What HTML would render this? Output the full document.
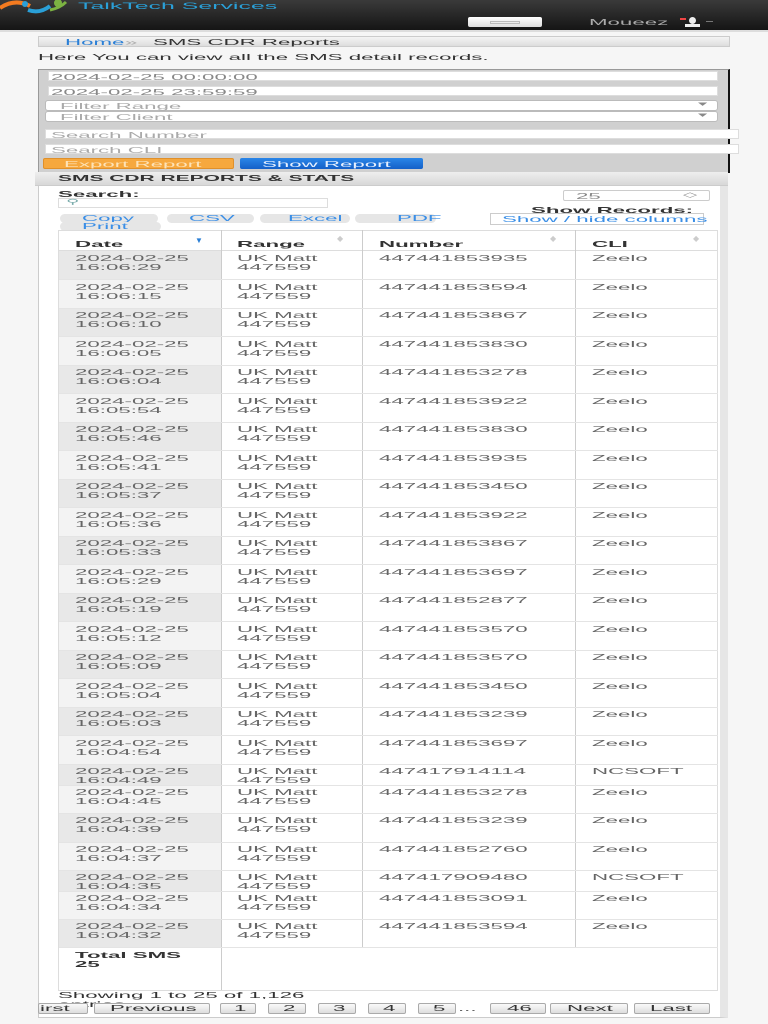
<!DOCTYPE html>
<html><head><meta charset="utf-8"><style>
*{margin:0;padding:0;box-sizing:border-box}
body{width:768px;height:1024px;overflow:hidden;background:#f6f6f6;font-family:"Liberation Sans",sans-serif;font-size:10px;color:#555;position:relative}
.a{position:absolute}
.t{position:absolute;white-space:nowrap;transform:scaleX(2.62);transform-origin:0 0;line-height:8.6px;font-size:8.5px;margin-top:1px;color:#666}
.b{font-weight:bold;color:#333}
.in{position:absolute;background:#fff;border:1px solid #ddd}
.pill{position:absolute;background:#e6e6e6;border-radius:6px;height:9px}
.pg{position:absolute;top:1003px;height:11px;border:1px solid #aaa;background:linear-gradient(#fafafa,#ddd);border-radius:2px}
</style></head><body>
<div class="a" style="left:0;top:0;width:768px;height:30px;background:linear-gradient(#3a3a3a,#151515)"></div>
<svg class="a" style="left:0;top:0" width="72" height="16" viewBox="0 0 72 16"><path d="M0 8 Q15 -2 30 6" stroke="#f47b20" stroke-width="4" fill="none"/><circle cx="25" cy="4" r="3" fill="#2aa0d8"/><path d="M28 10 Q40 14 50 6" stroke="#2aa0d8" stroke-width="4" fill="none"/><circle cx="58" cy="3" r="4" fill="#7cb342"/><path d="M50 10 Q60 8 66 2" stroke="#7cb342" stroke-width="3" fill="none"/></svg>
<span class="t" style="left:78px;top:2px;color:#2aa0d8;font-size:9.5px">TalkTech Services</span>
<div class="a" style="left:468px;top:17px;width:74px;height:10px;background:linear-gradient(#fff,#ddd);border-radius:2px"></div>
<div class="a" style="left:490px;top:21px;width:30px;height:3px;border:1px solid #bbb"></div>
<span class="t" style="left:589px;top:17px;color:#aaa">Moueez</span>
<div class="a" style="left:680px;top:18px;width:6px;height:2px;background:#e44"></div>
<div class="a" style="left:689px;top:17px;width:7px;height:7px;border-radius:50%;background:#eee"></div>
<div class="a" style="left:685px;top:24px;width:15px;height:3px;background:#eee"></div>
<div class="a" style="left:706px;top:21px;width:7px;height:1px;background:#777"></div>
<div class="a" style="left:0;top:30px;width:768px;height:2px;background:#ddd"></div>
<div class="a" style="left:38px;top:36px;width:692px;height:11px;background:linear-gradient(#f4f4f4,#ddd);border:1px solid #ccc"></div>
<span class="t" style="left:65px;top:37px;color:#2a7fd6">Home</span>
<span class="t" style="left:125px;top:37px;color:#aaa">»</span>
<span class="t" style="left:153px;top:37px;color:#333">SMS CDR Reports</span>
<span class="t" style="left:38px;top:52px;color:#333">Here You can view all the SMS detail records.</span>
<div class="a" style="left:38px;top:69px;width:692px;height:104px;background:#d0d0d0;border-right:2px solid #111;border-left:1px solid #999;border-top:1px solid #999"></div>
<div class="in" style="left:48px;top:71px;width:670px;height:10px"></div>
<span class="t" style="left:51px;top:72px;color:#888">2024-02-25 00:00:00</span>
<div class="in" style="left:48px;top:86px;width:670px;height:10px"></div>
<span class="t" style="left:51px;top:87px;color:#888">2024-02-25 23:59:59</span>
<div class="in" style="left:45px;top:100px;width:673px;height:11px;border-radius:3px;border-color:#bbb"></div>
<span class="t" style="left:60px;top:101px;color:#aaa">Filter Range</span>
<span class="t" style="left:698px;top:100px;color:#888;font-size:7px">▾</span>
<div class="in" style="left:45px;top:111px;width:673px;height:11px;border-radius:3px;border-color:#bbb"></div>
<span class="t" style="left:60px;top:112px;color:#aaa">Filter Client</span>
<span class="t" style="left:698px;top:111px;color:#888;font-size:7px">▾</span>
<div class="in" style="left:45px;top:129px;width:694px;height:10px"></div>
<span class="t" style="left:51px;top:130px;color:#aaa">Search Number</span>
<div class="in" style="left:45px;top:144px;width:694px;height:10px"></div>
<span class="t" style="left:51px;top:145px;color:#aaa">Search CLI</span>
<div class="a" style="left:43px;top:158px;width:191px;height:11px;background:#f6a83e;border:1px solid #e0902a;border-radius:2px"></div>
<span class="t" style="left:64px;top:159px;color:#fde3b8">Export Report</span>
<div class="a" style="left:240px;top:158px;width:183px;height:11px;background:linear-gradient(#2a86e8,#1460c8);border-radius:2px"></div>
<span class="t" style="left:262px;top:159px;color:#e6f0ff">Show Report</span>
<div class="a" style="left:38px;top:172px;width:690px;height:846px;background:#fff;border:1px solid #ccc;border-right:8px solid #e6e6e6"></div>
<div class="a" style="left:35px;top:172px;width:693px;height:14px;background:linear-gradient(#eee,#d8d8d8);border-bottom:1px solid #ccc"></div>
<span class="t b" style="left:58px;top:174px;font-size:8px">SMS CDR REPORTS &amp; STATS</span>
<span class="t b" style="left:58px;top:189px">Search:</span>
<div class="in" style="left:58px;top:198px;width:270px;height:10px"></div>
<span class="t" style="left:66px;top:198px;color:#7aa;font-size:7px">⚲</span>
<div class="in" style="left:563px;top:190px;width:147px;height:11px;border-color:#ccc;border-radius:2px"></div>
<span class="t" style="left:576px;top:191px;color:#888">25</span>
<span class="t" style="left:683px;top:191px;color:#888;font-size:7px">◇</span>
<span class="t b" style="left:531px;top:205px">Show Records:</span>
<div class="pill" style="left:60px;top:214px;width:98px"></div><span class="t" style="left:82px;top:213px;color:#3a8ee6">Copy</span>
<div class="pill" style="left:167px;top:214px;width:87px"></div><span class="t" style="left:189px;top:213px;color:#3a8ee6">CSV</span>
<div class="pill" style="left:260px;top:214px;width:90px"></div><span class="t" style="left:288px;top:213px;color:#3a8ee6">Excel</span>
<div class="pill" style="left:355px;top:214px;width:81px"></div><span class="t" style="left:397px;top:213px;color:#3a8ee6">PDF</span>
<div class="pill" style="left:60px;top:222px;width:101px"></div><span class="t" style="left:82px;top:221px;color:#3a8ee6">Print</span>
<div class="in" style="left:490px;top:213px;width:214px;height:12px;border-color:#ccc"></div>
<span class="t" style="left:502px;top:214px;color:#3a8ee6">Show / hide columns</span>
<div class="a" style="left:58px;top:230px;width:660px;height:760px;border:1px solid #ddd;border-bottom:none"></div>
<div class="a" style="left:58px;top:250px;width:660px;height:1px;background:#ddd"></div>
<div class="a" style="left:221px;top:230px;width:1px;height:760px;background:#ccc"></div>
<div class="a" style="left:362px;top:230px;width:1px;height:718px;background:#ccc"></div>
<div class="a" style="left:575px;top:230px;width:1px;height:718px;background:#ccc"></div>
<span class="t b" style="left:75px;top:239px">Date</span><span class="a" style="left:195px;top:236px;color:#2a7fd6;font-size:8px">▼</span>
<span class="t b" style="left:237px;top:239px">Range</span><span class="a" style="left:337px;top:234px;color:#ccc;font-size:8px">◆</span>
<span class="t b" style="left:379px;top:239px">Number</span><span class="a" style="left:550px;top:234px;color:#ccc;font-size:8px">◆</span>
<span class="t b" style="left:592px;top:239px">CLI</span><span class="a" style="left:693px;top:234px;color:#ccc;font-size:8px">◆</span>
<div class="a" style="left:59px;top:251px;width:162px;height:28px;background:#e8e8e8"></div><div class="a" style="left:59px;top:279px;width:659px;height:1px;background:#e4e4e4"></div><span class="t" style="left:75px;top:253px">2024-02-25<br>16:06:29</span><span class="t" style="left:237px;top:253px">UK Matt<br>447559</span><span class="t" style="left:379px;top:253px">447441853935</span><span class="t" style="left:592px;top:253px">Zeelo</span>
<div class="a" style="left:59px;top:280px;width:162px;height:28px;background:#f3f3f3"></div><div class="a" style="left:59px;top:308px;width:659px;height:1px;background:#e4e4e4"></div><span class="t" style="left:75px;top:282px">2024-02-25<br>16:06:15</span><span class="t" style="left:237px;top:282px">UK Matt<br>447559</span><span class="t" style="left:379px;top:282px">447441853594</span><span class="t" style="left:592px;top:282px">Zeelo</span>
<div class="a" style="left:59px;top:309px;width:162px;height:27px;background:#e8e8e8"></div><div class="a" style="left:59px;top:336px;width:659px;height:1px;background:#e4e4e4"></div><span class="t" style="left:75px;top:310px">2024-02-25<br>16:06:10</span><span class="t" style="left:237px;top:310px">UK Matt<br>447559</span><span class="t" style="left:379px;top:310px">447441853867</span><span class="t" style="left:592px;top:310px">Zeelo</span>
<div class="a" style="left:59px;top:337px;width:162px;height:28px;background:#f3f3f3"></div><div class="a" style="left:59px;top:365px;width:659px;height:1px;background:#e4e4e4"></div><span class="t" style="left:75px;top:339px">2024-02-25<br>16:06:05</span><span class="t" style="left:237px;top:339px">UK Matt<br>447559</span><span class="t" style="left:379px;top:339px">447441853830</span><span class="t" style="left:592px;top:339px">Zeelo</span>
<div class="a" style="left:59px;top:366px;width:162px;height:27px;background:#e8e8e8"></div><div class="a" style="left:59px;top:393px;width:659px;height:1px;background:#e4e4e4"></div><span class="t" style="left:75px;top:367px">2024-02-25<br>16:06:04</span><span class="t" style="left:237px;top:367px">UK Matt<br>447559</span><span class="t" style="left:379px;top:367px">447441853278</span><span class="t" style="left:592px;top:367px">Zeelo</span>
<div class="a" style="left:59px;top:394px;width:162px;height:28px;background:#f3f3f3"></div><div class="a" style="left:59px;top:422px;width:659px;height:1px;background:#e4e4e4"></div><span class="t" style="left:75px;top:396px">2024-02-25<br>16:05:54</span><span class="t" style="left:237px;top:396px">UK Matt<br>447559</span><span class="t" style="left:379px;top:396px">447441853922</span><span class="t" style="left:592px;top:396px">Zeelo</span>
<div class="a" style="left:59px;top:423px;width:162px;height:27px;background:#e8e8e8"></div><div class="a" style="left:59px;top:450px;width:659px;height:1px;background:#e4e4e4"></div><span class="t" style="left:75px;top:424px">2024-02-25<br>16:05:46</span><span class="t" style="left:237px;top:424px">UK Matt<br>447559</span><span class="t" style="left:379px;top:424px">447441853830</span><span class="t" style="left:592px;top:424px">Zeelo</span>
<div class="a" style="left:59px;top:451px;width:162px;height:28px;background:#f3f3f3"></div><div class="a" style="left:59px;top:479px;width:659px;height:1px;background:#e4e4e4"></div><span class="t" style="left:75px;top:453px">2024-02-25<br>16:05:41</span><span class="t" style="left:237px;top:453px">UK Matt<br>447559</span><span class="t" style="left:379px;top:453px">447441853935</span><span class="t" style="left:592px;top:453px">Zeelo</span>
<div class="a" style="left:59px;top:480px;width:162px;height:27px;background:#e8e8e8"></div><div class="a" style="left:59px;top:507px;width:659px;height:1px;background:#e4e4e4"></div><span class="t" style="left:75px;top:481px">2024-02-25<br>16:05:37</span><span class="t" style="left:237px;top:481px">UK Matt<br>447559</span><span class="t" style="left:379px;top:481px">447441853450</span><span class="t" style="left:592px;top:481px">Zeelo</span>
<div class="a" style="left:59px;top:508px;width:162px;height:28px;background:#f3f3f3"></div><div class="a" style="left:59px;top:536px;width:659px;height:1px;background:#e4e4e4"></div><span class="t" style="left:75px;top:510px">2024-02-25<br>16:05:36</span><span class="t" style="left:237px;top:510px">UK Matt<br>447559</span><span class="t" style="left:379px;top:510px">447441853922</span><span class="t" style="left:592px;top:510px">Zeelo</span>
<div class="a" style="left:59px;top:537px;width:162px;height:27px;background:#e8e8e8"></div><div class="a" style="left:59px;top:564px;width:659px;height:1px;background:#e4e4e4"></div><span class="t" style="left:75px;top:538px">2024-02-25<br>16:05:33</span><span class="t" style="left:237px;top:538px">UK Matt<br>447559</span><span class="t" style="left:379px;top:538px">447441853867</span><span class="t" style="left:592px;top:538px">Zeelo</span>
<div class="a" style="left:59px;top:565px;width:162px;height:28px;background:#f3f3f3"></div><div class="a" style="left:59px;top:593px;width:659px;height:1px;background:#e4e4e4"></div><span class="t" style="left:75px;top:567px">2024-02-25<br>16:05:29</span><span class="t" style="left:237px;top:567px">UK Matt<br>447559</span><span class="t" style="left:379px;top:567px">447441853697</span><span class="t" style="left:592px;top:567px">Zeelo</span>
<div class="a" style="left:59px;top:594px;width:162px;height:27px;background:#e8e8e8"></div><div class="a" style="left:59px;top:621px;width:659px;height:1px;background:#e4e4e4"></div><span class="t" style="left:75px;top:595px">2024-02-25<br>16:05:19</span><span class="t" style="left:237px;top:595px">UK Matt<br>447559</span><span class="t" style="left:379px;top:595px">447441852877</span><span class="t" style="left:592px;top:595px">Zeelo</span>
<div class="a" style="left:59px;top:622px;width:162px;height:28px;background:#f3f3f3"></div><div class="a" style="left:59px;top:650px;width:659px;height:1px;background:#e4e4e4"></div><span class="t" style="left:75px;top:624px">2024-02-25<br>16:05:12</span><span class="t" style="left:237px;top:624px">UK Matt<br>447559</span><span class="t" style="left:379px;top:624px">447441853570</span><span class="t" style="left:592px;top:624px">Zeelo</span>
<div class="a" style="left:59px;top:651px;width:162px;height:27px;background:#e8e8e8"></div><div class="a" style="left:59px;top:678px;width:659px;height:1px;background:#e4e4e4"></div><span class="t" style="left:75px;top:652px">2024-02-25<br>16:05:09</span><span class="t" style="left:237px;top:652px">UK Matt<br>447559</span><span class="t" style="left:379px;top:652px">447441853570</span><span class="t" style="left:592px;top:652px">Zeelo</span>
<div class="a" style="left:59px;top:679px;width:162px;height:28px;background:#f3f3f3"></div><div class="a" style="left:59px;top:707px;width:659px;height:1px;background:#e4e4e4"></div><span class="t" style="left:75px;top:681px">2024-02-25<br>16:05:04</span><span class="t" style="left:237px;top:681px">UK Matt<br>447559</span><span class="t" style="left:379px;top:681px">447441853450</span><span class="t" style="left:592px;top:681px">Zeelo</span>
<div class="a" style="left:59px;top:708px;width:162px;height:27px;background:#e8e8e8"></div><div class="a" style="left:59px;top:735px;width:659px;height:1px;background:#e4e4e4"></div><span class="t" style="left:75px;top:709px">2024-02-25<br>16:05:03</span><span class="t" style="left:237px;top:709px">UK Matt<br>447559</span><span class="t" style="left:379px;top:709px">447441853239</span><span class="t" style="left:592px;top:709px">Zeelo</span>
<div class="a" style="left:59px;top:736px;width:162px;height:28px;background:#f3f3f3"></div><div class="a" style="left:59px;top:764px;width:659px;height:1px;background:#e4e4e4"></div><span class="t" style="left:75px;top:738px">2024-02-25<br>16:04:54</span><span class="t" style="left:237px;top:738px">UK Matt<br>447559</span><span class="t" style="left:379px;top:738px">447441853697</span><span class="t" style="left:592px;top:738px">Zeelo</span>
<div class="a" style="left:59px;top:765px;width:162px;height:20px;background:#e8e8e8"></div><div class="a" style="left:59px;top:785px;width:659px;height:1px;background:#e4e4e4"></div><span class="t" style="left:75px;top:766px">2024-02-25<br>16:04:49</span><span class="t" style="left:237px;top:766px">UK Matt<br>447559</span><span class="t" style="left:379px;top:766px">447417914114</span><span class="t" style="left:592px;top:766px">NCSOFT</span>
<div class="a" style="left:59px;top:786px;width:162px;height:27px;background:#f3f3f3"></div><div class="a" style="left:59px;top:813px;width:659px;height:1px;background:#e4e4e4"></div><span class="t" style="left:75px;top:787px">2024-02-25<br>16:04:45</span><span class="t" style="left:237px;top:787px">UK Matt<br>447559</span><span class="t" style="left:379px;top:787px">447441853278</span><span class="t" style="left:592px;top:787px">Zeelo</span>
<div class="a" style="left:59px;top:814px;width:162px;height:28px;background:#e8e8e8"></div><div class="a" style="left:59px;top:842px;width:659px;height:1px;background:#e4e4e4"></div><span class="t" style="left:75px;top:815px">2024-02-25<br>16:04:39</span><span class="t" style="left:237px;top:815px">UK Matt<br>447559</span><span class="t" style="left:379px;top:815px">447441853239</span><span class="t" style="left:592px;top:815px">Zeelo</span>
<div class="a" style="left:59px;top:843px;width:162px;height:27px;background:#f3f3f3"></div><div class="a" style="left:59px;top:870px;width:659px;height:1px;background:#e4e4e4"></div><span class="t" style="left:75px;top:844px">2024-02-25<br>16:04:37</span><span class="t" style="left:237px;top:844px">UK Matt<br>447559</span><span class="t" style="left:379px;top:844px">447441852760</span><span class="t" style="left:592px;top:844px">Zeelo</span>
<div class="a" style="left:59px;top:871px;width:162px;height:20px;background:#e8e8e8"></div><div class="a" style="left:59px;top:891px;width:659px;height:1px;background:#e4e4e4"></div><span class="t" style="left:75px;top:872px">2024-02-25<br>16:04:35</span><span class="t" style="left:237px;top:872px">UK Matt<br>447559</span><span class="t" style="left:379px;top:872px">447417909480</span><span class="t" style="left:592px;top:872px">NCSOFT</span>
<div class="a" style="left:59px;top:892px;width:162px;height:27px;background:#f3f3f3"></div><div class="a" style="left:59px;top:919px;width:659px;height:1px;background:#e4e4e4"></div><span class="t" style="left:75px;top:893px">2024-02-25<br>16:04:34</span><span class="t" style="left:237px;top:893px">UK Matt<br>447559</span><span class="t" style="left:379px;top:893px">447441853091</span><span class="t" style="left:592px;top:893px">Zeelo</span>
<div class="a" style="left:59px;top:920px;width:162px;height:27px;background:#e8e8e8"></div><div class="a" style="left:59px;top:947px;width:659px;height:1px;background:#e4e4e4"></div><span class="t" style="left:75px;top:921px">2024-02-25<br>16:04:32</span><span class="t" style="left:237px;top:921px">UK Matt<br>447559</span><span class="t" style="left:379px;top:921px">447441853594</span><span class="t" style="left:592px;top:921px">Zeelo</span>
<span class="t b" style="left:75px;top:950px">Total SMS<br>25</span>
<div class="a" style="left:58px;top:990px;width:660px;height:1px;background:#ddd"></div>
<span class="t" style="left:58px;top:990px;color:#333">Showing 1 to 25 of 1,126<br>entries</span>
<div class="pg" style="left:38px;width:50px"></div><span class="t" style="left:40px;top:1003px;color:#333">irst</span>
<div class="pg" style="left:94px;width:116px"></div><span class="t" style="left:110px;top:1003px;color:#333">Previous</span>
<div class="pg" style="left:220px;width:36px"></div><span class="t" style="left:234px;top:1003px;color:#333">1</span>
<div class="pg" style="left:268px;width:38px"></div><span class="t" style="left:283px;top:1003px;color:#333">2</span>
<div class="pg" style="left:318px;width:38px"></div><span class="t" style="left:333px;top:1003px;color:#333">3</span>
<div class="pg" style="left:368px;width:38px"></div><span class="t" style="left:383px;top:1003px;color:#333">4</span>
<div class="pg" style="left:418px;width:38px"></div><span class="t" style="left:433px;top:1003px;color:#333">5</span>
<span class="t" style="left:458px;top:1003px;color:#555">...</span>
<div class="pg" style="left:490px;width:56px"></div><span class="t" style="left:507px;top:1003px;color:#333">46</span>
<div class="pg" style="left:550px;width:78px"></div><span class="t" style="left:567px;top:1003px;color:#333">Next</span>
<div class="pg" style="left:634px;width:76px"></div><span class="t" style="left:650px;top:1003px;color:#333">Last</span>
</body></html>
